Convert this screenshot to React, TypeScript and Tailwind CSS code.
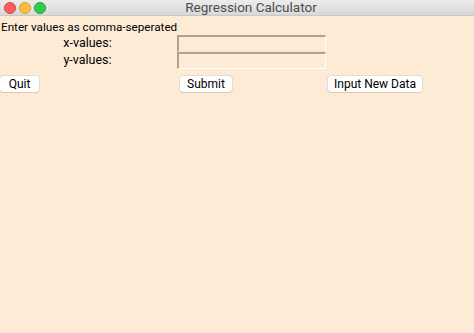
export default function App() {
  return (
    <div className="w-[474px] h-[333px] bg-[#feebd6] flex flex-col overflow-hidden" style={{ fontFamily: 'Roboto, "Liberation Sans", Arial, sans-serif' }}>
      <div className="h-[16px] flex items-center relative bg-gradient-to-b from-[#ececec] to-[#d8d8d8] border-b border-[#c8c8c8]">
        <div className="flex items-center gap-[3px] pl-[4px]">
          <span className="w-[12px] h-[12px] rounded-full bg-[#fc605c] border border-[#e0443e]" />
          <span className="w-[12px] h-[12px] rounded-full bg-[#fdbc40] border border-[#dea123]" />
          <span className="w-[12px] h-[12px] rounded-full bg-[#34c84a] border border-[#24a732]" />
        </div>
        <div className="absolute inset-0 flex items-center justify-center pl-[28px] text-[13.5px] text-[#4d4d4d]">Regression Calculator</div>
      </div>
      <div className="grid grid-cols-[177px_149px_auto] text-[12px] text-black leading-none">
        <div className="h-[19px] flex items-end pb-[1px] pl-[1px] whitespace-nowrap text-[11.7px]">Enter values as comma-seperated</div>
        <div />
        <div />
        <div className="h-[17px] flex items-center justify-center pr-[2px] text-[12.5px]">x-values:</div>
        <div className="h-[17px] border-t-2 border-l-2 border-t-[#b4a28f] border-l-[#b4a28f] border-r border-b border-r-white border-b-[#f4e4d2] bg-[#feebd6]" />
        <div />
        <div className="h-[17px] flex items-center justify-center pr-[2px] text-[12.5px]">y-values:</div>
        <div className="h-[17px] border-t-2 border-l-2 border-t-[#b4a28f] border-l-[#b4a28f] border-r border-b border-r-white border-b-white bg-[#feebd6]" />
        <div />
        <div className="pt-[7px]">
          <button className="h-[16px] w-[39px] bg-white rounded-[3px] shadow-[0_0_0_0.5px_#d4c9bd,0_1px_1px_#d9cbbb] text-[12px] flex items-center justify-center">Quit</button>
        </div>
        <div className="pt-[7px] pl-[3px]">
          <button className="h-[16px] w-[52px] bg-white rounded-[3px] shadow-[0_0_0_0.5px_#d4c9bd,0_1px_1px_#d9cbbb] text-[12px] flex items-center justify-center">Submit</button>
        </div>
        <div className="pt-[7px] pl-[2px]">
          <button className="h-[16px] w-[94px] bg-white rounded-[3px] shadow-[0_0_0_0.5px_#d4c9bd,0_1px_1px_#d9cbbb] text-[12px] flex items-center justify-center whitespace-nowrap">Input New Data</button>
        </div>
      </div>
    </div>
  );
}
